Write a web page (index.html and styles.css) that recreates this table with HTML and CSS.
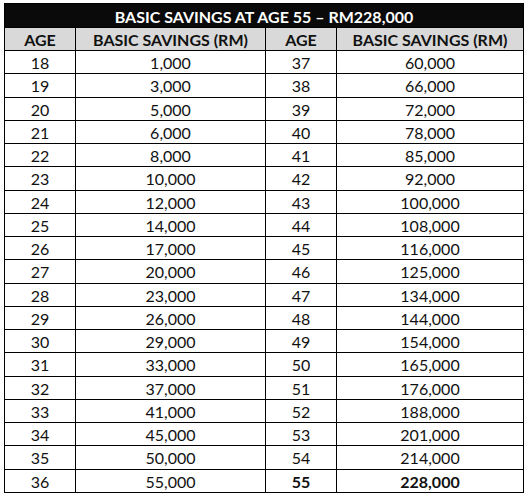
FILE: index.html
```html
<!DOCTYPE html>
<html lang="en">
<head>
<meta charset="utf-8">
<title>Basic Savings at Age 55</title>
<link rel="stylesheet" href="styles.css">
</head>
<body>
<div class="sheet">
  <div class="title">BASIC SAVINGS AT AGE 55 – RM228,000</div>
  <div class="head">AGE</div>
  <div class="head">BASIC SAVINGS (RM)</div>
  <div class="head">AGE</div>
  <div class="head">BASIC SAVINGS (RM)</div>

  <div class="cell">18</div><div class="cell">1,000</div><div class="cell">37</div><div class="cell">60,000</div>
  <div class="cell">19</div><div class="cell">3,000</div><div class="cell">38</div><div class="cell">66,000</div>
  <div class="cell">20</div><div class="cell">5,000</div><div class="cell">39</div><div class="cell">72,000</div>
  <div class="cell">21</div><div class="cell">6,000</div><div class="cell">40</div><div class="cell">78,000</div>
  <div class="cell">22</div><div class="cell">8,000</div><div class="cell">41</div><div class="cell">85,000</div>
  <div class="cell">23</div><div class="cell">10,000</div><div class="cell">42</div><div class="cell">92,000</div>
  <div class="cell">24</div><div class="cell">12,000</div><div class="cell">43</div><div class="cell">100,000</div>
  <div class="cell">25</div><div class="cell">14,000</div><div class="cell">44</div><div class="cell">108,000</div>
  <div class="cell">26</div><div class="cell">17,000</div><div class="cell">45</div><div class="cell">116,000</div>
  <div class="cell">27</div><div class="cell">20,000</div><div class="cell">46</div><div class="cell">125,000</div>
  <div class="cell">28</div><div class="cell">23,000</div><div class="cell">47</div><div class="cell">134,000</div>
  <div class="cell">29</div><div class="cell">26,000</div><div class="cell">48</div><div class="cell">144,000</div>
  <div class="cell">30</div><div class="cell">29,000</div><div class="cell">49</div><div class="cell">154,000</div>
  <div class="cell">31</div><div class="cell">33,000</div><div class="cell">50</div><div class="cell">165,000</div>
  <div class="cell">32</div><div class="cell">37,000</div><div class="cell">51</div><div class="cell">176,000</div>
  <div class="cell">33</div><div class="cell">41,000</div><div class="cell">52</div><div class="cell">188,000</div>
  <div class="cell">34</div><div class="cell">45,000</div><div class="cell">53</div><div class="cell">201,000</div>
  <div class="cell">35</div><div class="cell">50,000</div><div class="cell">54</div><div class="cell">214,000</div>
  <div class="cell">36</div><div class="cell">55,000</div><div class="cell bold">55</div><div class="cell bold">228,000</div>
</div>
</body>
</html>
```
FILE: styles.css
```css
html, body {
  margin: 0;
  padding: 0;
  background: #ffffff;
}

body {
  font-family: "Lato", "Open Sans", "Liberation Sans", sans-serif;
  color: #111111;
}

.sheet {
  margin: 3px 0 0 4px;
  width: 520px;
  display: grid;
  grid-template-columns: 71px 190px 71px 187px;
  grid-template-rows: 24px 23px repeat(19, 23.26px);
  border-left: 1px solid #000;
  border-top: 1px solid #000;
  box-sizing: border-box;
}

.title {
  grid-column: 1 / -1;
  background: #0a0a0a;
  color: #ffffff;
  font-weight: 700;
  font-size: 16px;
  display: flex;
  align-items: center;
  justify-content: center;
  border-right: 1px solid #000;
  border-bottom: 1px solid #000;
  padding-top: 1px;
}

.head {
  background: #d9d9d9;
  font-weight: 700;
  font-size: 16px;
  color: #111;
  display: flex;
  align-items: center;
  justify-content: center;
  border-right: 1px solid #000;
  border-bottom: 1px solid #000;
}

.cell {
  font-size: 16px;
  display: flex;
  align-items: center;
  justify-content: center;
  border-right: 1px solid #000;
  border-bottom: 1px solid #000;
  padding-top: 1px;
}

.bold {
  font-weight: 700;
}
```
